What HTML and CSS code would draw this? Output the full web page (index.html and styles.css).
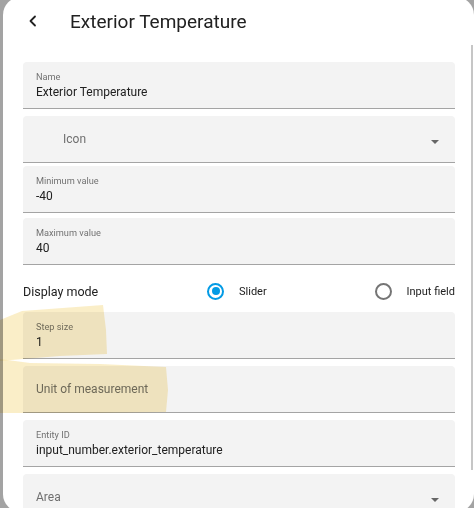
FILE: index.html
```html
<!DOCTYPE html>
<html lang="en">
<head>
<meta charset="utf-8">
<title>Exterior Temperature</title>
<link rel="stylesheet" href="styles.css">
</head>
<body>
<div class="screen">
  <div class="dialog">
    <header class="topbar">
      <svg class="back" width="10" height="14" viewBox="0 0 10 14"><polyline points="7,2.5 2.5,7 7,11.5" fill="none" stroke="#212121" stroke-width="1.8" stroke-linecap="round" stroke-linejoin="round"/></svg>
      <h1 class="title">Exterior Temperature</h1>
    </header>
    <div class="form">
      <div class="field f-name">
        <span class="label">Name</span>
        <span class="value">Exterior Temperature</span>
      </div>
      <div class="field f-icon select">
        <span class="placeholder icon-ph">Icon</span>
        <span class="arrow"></span>
      </div>
      <div class="field f-min">
        <span class="label">Minimum value</span>
        <span class="value">-40</span>
      </div>
      <div class="field f-max">
        <span class="label">Maximum value</span>
        <span class="value">40</span>
      </div>
      <div class="mode-row">
        <span class="mode-label">Display mode</span>
        <label class="option"><span class="radio checked"></span><span>Slider</span></label>
        <label class="option option-end"><span class="radio"></span><span>Input field</span></label>
      </div>
      <div class="field f-step">
        <span class="label">Step size</span>
        <span class="value">1</span>
      </div>
      <div class="field f-unit">
        <span class="placeholder">Unit of measurement</span>
      </div>
      <div class="field f-entity">
        <span class="label">Entity ID</span>
        <span class="value">input_number.exterior_temperature</span>
      </div>
      <div class="field f-area select">
        <span class="placeholder">Area</span>
        <span class="arrow"></span>
      </div>
    </div>
    <div class="scrollbar"></div>
  </div>
  <svg class="highlight" width="474" height="508" viewBox="0 0 474 508">
    <polygon points="0,320 22,311 103,305 106,330 107,354 60,356 23,359 0,361" />
    <polygon points="0,359 30,363 100,364 166,367 168,390 166,412 100,413 0,413" />
  </svg>
</div>
</body>
</html>
```
FILE: styles.css
```css
* { box-sizing: border-box; }
html, body { margin: 0; padding: 0; }
body {
  width: 474px;
  height: 508px;
  overflow: hidden;
  background: #a3a3a3;
  font-family: Roboto, "Noto Sans", sans-serif;
  color: #212121;
}
.screen {
  position: relative;
  width: 474px;
  height: 508px;
  overflow: hidden;
}
.dialog {
  position: relative;
  margin: -3px 0 0 3px;
  width: 471px;
  height: 515px;
  background: #ffffff;
  border-radius: 18px;
  overflow: hidden;
}
.topbar {
  display: flex;
  align-items: center;
  height: 48px;
  padding-left: 25px;
}
.back { display: block; }
.title {
  margin: 0 0 0 32px;
  font-size: 19px;
  font-weight: 400;
  color: #212121;
  letter-spacing: 0;
}
.form {
  display: flex;
  flex-direction: column;
  padding: 17px 19px 0 20px;
}
.field {
  position: relative;
  height: 47px;
  background: #f3f3f3;
  border-bottom: 1px solid #a4a4a4;
  border-radius: 4px 4px 0 0;
  padding: 9px 13px 0 13px;
  display: flex;
  flex-direction: column;
}
.f-icon { margin-top: 7px; }
.f-min { margin-top: 3px; }
.f-max { margin-top: 5px; }
.f-step { margin-top: 0; }
.f-unit, .f-entity, .f-area { margin-top: 7px; }
.label {
  font-size: 9.2px;
  line-height: 12px;
  color: #727272;
}
.value {
  font-size: 12px;
  line-height: 18px;
  color: #212121;
}
.placeholder {
  font-size: 12px;
  line-height: 18px;
  color: #6f6f6f;
  margin-top: 5px;
}
.icon-ph { margin-left: 27px; }
.arrow {
  position: absolute;
  right: 16px;
  top: 24px;
  width: 0;
  height: 0;
  border-left: 4.5px solid transparent;
  border-right: 4.5px solid transparent;
  border-top: 4.5px solid #666666;
}
.mode-row {
  height: 47px;
  display: flex;
  align-items: center;
  padding-top: 5px;
  font-size: 12px;
}
.mode-label {
  width: 184px;
  font-size: 12.5px;
  color: #212121;
}
.option {
  display: flex;
  align-items: center;
  gap: 15px;
  font-size: 11px;
  color: #212121;
}
.option-end { margin-left: auto; }
.radio {
  position: relative;
  width: 17px;
  height: 17px;
  border: 2px solid #757575;
  border-radius: 50%;
}
.radio.checked { border-color: #039be5; }
.radio.checked::after {
  content: "";
  position: absolute;
  left: 2.5px;
  top: 2.5px;
  width: 8px;
  height: 8px;
  border-radius: 50%;
  background: #039be5;
}
.scrollbar {
  position: absolute;
  right: 1px;
  top: 48px;
  width: 2px;
  height: 425px;
  background: #c6c6c6;
}
.highlight {
  position: absolute;
  left: 0;
  top: 0;
  pointer-events: none;
  mix-blend-mode: multiply;
}
.highlight polygon {
  fill: #f6de96;
  opacity: 0.52;
}
```
